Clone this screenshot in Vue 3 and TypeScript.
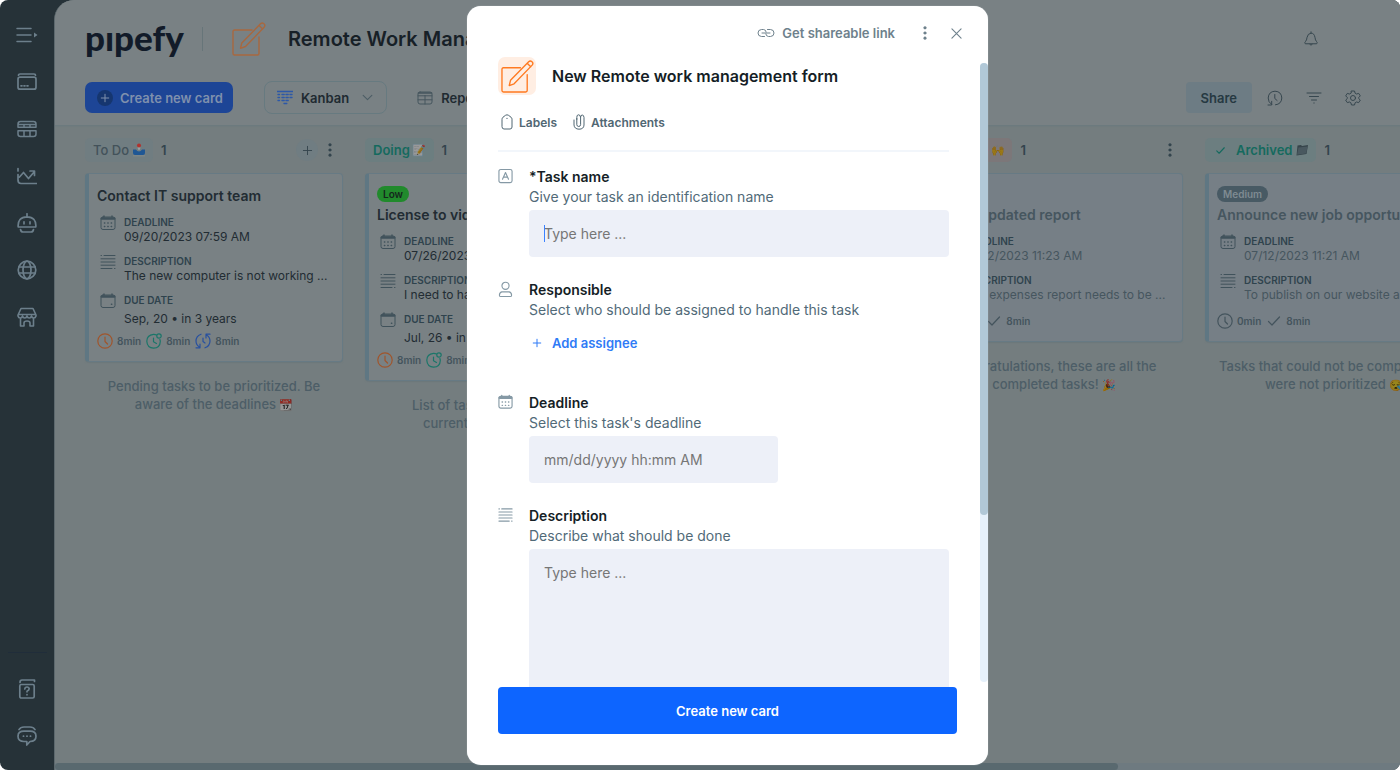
<script setup lang="ts">
import { ref } from 'vue'

interface Field { icon: string; label: string; value: string; due?: boolean }
interface Time { icon: string; text: string; tone: string }
interface Card { tag?: string; tagTone?: string; title: string; fields: Field[]; times: Time[]; muted?: boolean }
interface Column { id: string; name: string; emoji?: string; art?: string; tone: string; count?: string; add?: boolean; check?: boolean; card?: Card; note: string[]; noteEmoji: string }

const navItems = [
  { id: 'menu', label: 'Expand menu' },
  { id: 'home', label: 'Home' },
  { id: 'database', label: 'Databases' },
  { id: 'chart', label: 'Dashboards' },
  { id: 'robot', label: 'Automations' },
  { id: 'globe', label: 'Portals' },
  { id: 'store', label: 'Templates' },
]
const helpItems = [
  { id: 'help', label: 'Help' },
  { id: 'chat', label: 'Chat' },
]

const activeTimes: Time[] = [
  { icon: 'clock', text: '8min', tone: 'orange' },
  { icon: 'clock-dot', text: '8min', tone: 'green' },
  { icon: 'clock-sync', text: '8min', tone: 'blue' },
]

const columns: Column[] = [
  {
    id: 'todo', name: 'To Do', art: 'inbox', tone: 'grey', count: '1', add: true,
    card: {
      title: 'Contact IT support team',
      fields: [
        { icon: 'calendar', label: 'DEADLINE', value: '09/20/2023 07:59 AM' },
        { icon: 'lines', label: 'DESCRIPTION', value: 'The new computer is not working ...' },
        { icon: 'due', label: 'DUE DATE', value: 'Sep, 20 • in 3 years', due: true },
      ],
      times: activeTimes,
    },
    note: ['Pending tasks to be prioritized. Be', 'aware of the deadlines'], noteEmoji: '📆',
  },
  {
    id: 'doing', name: 'Doing', emoji: '📝', tone: 'teal', count: '1',
    card: {
      tag: 'Low', tagTone: 'low', title: 'License to video platform',
      fields: [
        { icon: 'calendar', label: 'DEADLINE', value: '07/26/2023 11:00 AM' },
        { icon: 'lines', label: 'DESCRIPTION', value: 'I need to have access to the ...' },
        { icon: 'due', label: 'DUE DATE', value: 'Jul, 26 • in 3 years', due: true },
      ],
      times: activeTimes,
    },
    note: ['List of tasks that are being', 'currently worked on'], noteEmoji: '💻',
  },
  { id: 'review', name: '', tone: 'none', note: [], noteEmoji: '' },
  {
    id: 'done', name: 'Done', emoji: '🙌', tone: 'pink', count: '1', check: true,
    card: {
      tag: 'Low', tagTone: 'low', title: 'Share updated report', muted: true,
      fields: [
        { icon: 'calendar', label: 'DEADLINE', value: '07/12/2023 11:23 AM' },
        { icon: 'lines', label: 'DESCRIPTION', value: 'The expenses report needs to be ...' },
      ],
      times: [{ icon: 'clock', text: '0min', tone: 'plain' }, { icon: 'tick', text: '8min', tone: 'plain' }],
    },
    note: ['Congratulations, these are all the', 'completed tasks!'], noteEmoji: '🎉',
  },
  {
    id: 'archived', name: 'Archived', art: 'folder', tone: 'teal', count: '1', check: true,
    card: {
      tag: 'Medium', tagTone: 'medium', title: 'Announce new job opportunity', muted: true,
      fields: [
        { icon: 'calendar', label: 'DEADLINE', value: '07/12/2023 11:21 AM' },
        { icon: 'lines', label: 'DESCRIPTION', value: 'To publish on our website and ...' },
      ],
      times: [{ icon: 'clock', text: '0min', tone: 'plain' }, { icon: 'tick', text: '8min', tone: 'plain' }],
    },
    note: ['Tasks that could not be completed or', 'were not prioritized'], noteEmoji: '😪',
  },
]

const taskName = ref('')
const deadline = ref('')
const description = ref('')
</script>

<template>
  <div class="app">
    <svg class="defs" aria-hidden="true">
      <symbol id="menu" viewBox="0 0 24 20"><path d="M2 3.500h14M2 10h14M2 16.500h14" /><path class="solid" d="M19 7.500v5l3.500-2.500z" /></symbol>
      <symbol id="home" viewBox="0 0 20 20"><path d="M1.500 3.200q0-1.200 1.500-1.200h14q1.500 0 1.500 1.200" /><rect x="1" y="5.200" width="18" height="12" rx="2" /><path d="M4 13.800h1M7 13.800h1M10 13.800h1" /></symbol>
      <symbol id="database" viewBox="0 0 20 20"><path d="M3.500 2.500h13q2.500 0 2.500 2.500v3.200h-18v-3.200q0-2.500 2.500-2.500zM1 11.800h18v3.200q0 2.500-2.500 2.500h-13q-2.500 0-2.500-2.500zM7 5.500v2.700M13 5.500v2.700M7 11.800v5.700M13 11.800v5.700M1 5.500h18" stroke-width="1.500" /></symbol>
      <symbol id="chart" viewBox="0 0 20 20"><path d="M1 2.500v2.500M1 8.500v5.500q0 3.500 3 3.500h15.500M2.500 11l4-4.500 5 6 6-7M13 5h4.500v4.500" /></symbol>
      <symbol id="robot" viewBox="0 0 20 20"><path d="M10 .800v2.500M1.200 14q-.8-10 8.800-10.200Q19.600 4 18.800 14zM3.500 16.500q.5 2.500 2.500 2.500h8q2 0 2.500-2.500M7 8.800v2M13 8.800v2" /></symbol>
      <symbol id="globe" viewBox="0 0 20 20"><circle cx="10" cy="10" r="8.800" /><ellipse cx="10" cy="10" rx="4" ry="8.800" /><path d="M1.800 7h16.400M1.800 13h16.400" /></symbol>
      <symbol id="store" viewBox="0 0 20 20"><path d="M4 1.500h12l3 6.500v1q-.5 2-2.300 2-1.700 0-2.200-2-.5 2-2.250 2T10 9q-.5 2-2.250 2T5.500 9q-.5 2-2.200 2Q1.500 11 1 9v-1zM1.500 7.500h17M3.500 11.500v7.500h3.500v-3q0-2 3-2t3 2v3h3.500v-7.500" stroke-width="1.600" /></symbol>
      <symbol id="help" viewBox="0 0 20 20"><path d="M3 3.500q0-2.500 2-2.500h12.500v1.500" /><rect x="2.800" y="5.500" width="14.400" height="13.500" rx="1.500" /><path d="M7.800 10q.2-2 2.200-2t2.200 1.800Q12.200 11.300 10 12.200v.6M10 15.600v.2" /></symbol>
      <symbol id="chat" viewBox="0 0 20 20"><path d="M2 3.600Q3.500 1 7 1h6q3.500 0 5 2.600M7 5.200h6q6 0 6 5 0 5-6 5.300l-3.200 3.500v-3.500H7q-6 0-6-5.300 0-5 6-5z" /><path d="M6.400 10.200h.2M9.900 10.200h.2M13.400 10.200h.2" /></symbol>
      <symbol id="form" viewBox="0 0 34 34"><path d="M20 8H2.500q-1.500 0-1.500 1.500v22q0 1.500 1.500 1.500h23q1.500 0 1.500-1.500V15M28.500 1.800q1.600-1.600 3.400 0t.2 3.500L13.500 24.500l-5 1.800 1.300-5.400zM27 3.300l3.600 3.600" /></symbol>
      <symbol id="kanban" viewBox="0 0 16 16"><path d="M.5 1.500h15" stroke-width="1.600" /><path d="M1 4.500h1.500M5 4.500h2.200M9 4.500h2.200M13 4.500h2M1 7.500h1.500M5 7.500h2.200M9 7.500h2.200M13 7.500h2M1 10.500h1.500M5 10.500h2.200M9 10.500h2.200M7 13.500h2.800" /></symbol>
      <symbol id="table" viewBox="0 0 16 16"><rect x="1" y="2" width="14" height="12" rx="2" /><path d="M1 5.800h14M1 9.800h14M8 5.500v8.500" /><path d="M1.500 3h13" stroke-width="1.600" /></symbol>
      <symbol id="chevron" viewBox="0 0 12 12"><path d="M2 4l4 4 4-4" /></symbol>
      <symbol id="bell" viewBox="0 0 16 16"><path d="M8 .800v1.200M2 12.500q-.8-.8.500-2 1.200-1.200 1.500-4Q4.800 2.400 8 2.200t4 4.300q.3 2.800 1.500 4 1.300 1.200.5 2zM6.800 13.500q1.200 1.600 2.400 0" /></symbol>
      <symbol id="history" viewBox="0 0 16 16"><path d="M4.500 14.300Q1.200 12.300 1.200 8 1.600 1.500 8 1.200q6.500.3 6.800 6.800-.3 6.200-6.300 6.800M7.800 4.500v4l2.300 2M1 15h3.700v-3.700" /></symbol>
      <symbol id="filter" viewBox="0 0 16 16"><path d="M1 3h14M3.500 6.500h9M5.500 10h5M7.800 13h.4" /></symbol>
      <symbol id="gear" viewBox="0 0 16 16"><circle cx="8" cy="8" r="2.500" /><path d="M6.500 1h3l.6 2.200 1.400.8 2.200-.6 1.600 2.500L13.700 7.500v1l1.600 1.600-1.600 2.500-2.200-.6-1.400.8L9.500 15h-3l-.6-2.200-1.400-.8-2.200.6L.7 10.100l1.600-1.600v-1L.7 5.900l1.600-2.500 2.200.6 1.400-.8z" /></symbol>
      <symbol id="plus" viewBox="0 0 12 12"><path d="M6 1.500v9M1.500 6h9" /></symbol>
      <symbol id="tick" viewBox="0 0 16 16"><path d="M2.500 8.500l3.500 3.500 7.500-8" /></symbol>
      <symbol id="dots" viewBox="0 0 6 16"><path class="solid" d="M3 1.200a1.600 1.600 0 1 0 .01 0zM3 6.400a1.600 1.600 0 1 0 .01 0zM3 11.600a1.600 1.600 0 1 0 .01 0z" /></symbol>
      <symbol id="calendar" viewBox="0 0 16 16"><rect x="1" y="2" width="14" height="12.500" rx="2" /><path d="M1.800 3.500h12.400" stroke-width="2.600" /><path d="M4 1v1M12 1v1M4.400 8h.4M7.800 8h.4M11.200 8h.4M4.400 11.500h.4M7.800 11.500h.4M11.200 11.500h.4" stroke-width="1.400" /></symbol>
      <symbol id="lines" viewBox="0 0 16 16"><path d="M1 1.500h.5M4 1.500h11M1 4.800h14M1 8h14M1 11.200h14M1 14.500h11M14.500 14.500h.5" /></symbol>
      <symbol id="due" viewBox="0 0 16 16"><rect x="1" y="2" width="14" height="12.500" rx="2" /><path d="M1.800 3.500h12.400" stroke-width="2.600" /><path d="M4 1v1M12 1v1M11.400 11.300h.4" stroke-width="1.400" /></symbol>
      <symbol id="clock" viewBox="0 0 16 16"><circle cx="8" cy="8" r="7.200" /><path d="M8 4v4.500l2.500 2.500" /></symbol>
      <symbol id="clock-dot" viewBox="0 0 16 16"><path d="M10.500 2Q9 1.200 7.500 1.300.8 2 .8 8.300 1.200 15 7.600 15.200 14 15 14.300 8.500q0-1-.4-2M7.500 5v3.800l3 1.700" /><circle cx="13" cy="3" r="2.200" /></symbol>
      <symbol id="clock-sync" viewBox="0 0 16 16"><path d="M6 1.200Q1 3 1 8q0 4 3.500 6M1 14.800h4V11M10 14.800Q15 13 15 8q0-4-3.500-6M15 1.200h-4V5M8 5v3.500l2 1.500" /></symbol>
      <symbol id="link" viewBox="0 0 18 12"><path d="M10.500 2.500h3Q17 2.700 17 6t-3.500 3.500h-2Q9 9.300 8.800 7M7.500 9.500h-3Q1 9.300 1 6t3.500-3.500h2Q9 2.700 9.200 5M5 6h8" /></symbol>
      <symbol id="close" viewBox="0 0 12 12"><path d="M1 1l10 10M11 1L1 11" /></symbol>
      <symbol id="label" viewBox="0 0 12 16"><path d="M1 5.200Q1 4 2 3.200L4.500 1.300Q6 .3 7.500 1.300L10 3.200q1 .8 1 2V13q0 2-2 2H3q-2 0-2-2zM5.800 4.400h.4" /></symbol>
      <symbol id="clip" viewBox="0 0 12 16"><path d="M3.800 4.500v6.200q.2 1.800 1.900 1.800t1.900-1.800V3.400Q7.600 1 9.200 1T11 3.400v7.600q-.2 4.200-5 4.200-4.600-.2-5-4.200V6M7.600 3.400Q7.500.8 5.600.8T3.800 3.400v2" /></symbol>
      <symbol id="letter" viewBox="0 0 16 16"><rect x="1" y="1" width="14" height="14" rx="2" /><path d="M4.800 11.500L8 4.300l3.200 7.200M6 9.200h4" /></symbol>
      <symbol id="person" viewBox="0 0 16 18"><circle cx="8" cy="5" r="3.800" /><path d="M4 11.500h8q2.500.8 2.500 3.500 0 1.500-1.500 1.500H3q-1.500 0-1.500-1.500 0-2.700 2.500-3.500z" /></symbol>
      <symbol id="inbox" viewBox="0 0 14 14"><path d="M1 12h12v1.500H1z" fill="#7c8586" stroke="none" /><path d="M1 6.500h3q1 2 3 2t3-2h3v3.500q0 2-2 2H3q-2 0-2-2z" fill="#1f5794" stroke="none" /><path d="M5.800 4h2.400v2L7 7.500 5.800 6z" fill="#96a0a3" stroke="none" /><circle cx="7" cy="2.500" r="2" fill="#b0332e" stroke="none" /></symbol>
      <symbol id="folder" viewBox="0 0 14 14"><path d="M2.500 2.500l3.500-.5 1 1 6-1-1.500 9-10 1.500z" fill="#36444a" stroke="none" /><path d="M3.500 4.500l9-1-1.300 7-9.200 1.300z" fill="#49585f" stroke="none" /></symbol>
    </svg>

    <nav class="sidebar" aria-label="Main">
      <button v-for="item in navItems" :key="item.id" type="button" class="nav-btn" :aria-label="item.label">
        <svg :class="{ wide: item.id === 'menu' }"><use :href="'#' + item.id" /></svg>
      </button>
      <hr class="nav-rule">
      <button v-for="item in helpItems" :key="item.id" type="button" class="nav-btn" :aria-label="item.label">
        <svg><use :href="'#' + item.id" /></svg>
      </button>
    </nav>

    <main class="main">
      <header class="header">
        <div class="brand-row">
          <span class="logo">pıpefy</span>
          <span class="brand-rule"></span>
          <svg class="pipe-icon"><use href="#form" /></svg>
          <h1>Remote Work Management</h1>
          <button type="button" class="bell" aria-label="Notifications"><svg class="i16"><use href="#bell" /></svg></button>
        </div>
        <div class="tool-row">
          <button type="button" class="create"><span class="create-plus"><svg><use href="#plus" /></svg></span>Create new card</button>
          <button type="button" class="view"><svg class="i16 blue"><use href="#kanban" /></svg>Kanban<svg class="chev"><use href="#chevron" /></svg></button>
          <button type="button" class="reports"><svg class="i16"><use href="#table" /></svg>Reports</button>
          <button type="button" class="share">Share</button>
          <button type="button" class="tool" aria-label="History"><svg class="i16"><use href="#history" /></svg></button>
          <button type="button" class="tool" aria-label="Filter"><svg class="i16"><use href="#filter" /></svg></button>
          <button type="button" class="tool" aria-label="Settings"><svg class="i16"><use href="#gear" /></svg></button>
        </div>
      </header>

      <div class="board">
        <section v-for="col in columns" :key="col.id" class="column">
          <template v-if="col.card">
            <div class="col-head">
              <h2 class="chip" :class="col.tone">
                <svg v-if="col.check" class="chip-check"><use href="#tick" /></svg>{{ col.name }}<span v-if="col.emoji" class="emoji">{{ col.emoji }}</span><svg v-if="col.art" class="art"><use :href="'#' + col.art" /></svg>
              </h2>
              <span class="count">{{ col.count }}</span>
              <button v-if="col.add" type="button" class="col-add" aria-label="Add card"><svg><use href="#plus" /></svg></button>
              <button type="button" class="col-more" aria-label="Column options"><svg class="dots"><use href="#dots" /></svg></button>
            </div>
            <article class="card" :class="{ muted: col.card.muted }">
              <span v-if="col.card.tag" class="tag" :class="col.card.tagTone">{{ col.card.tag }}</span>
              <h3>{{ col.card.title }}</h3>
              <div v-for="f in col.card.fields" :key="f.label" class="field" :class="{ due: f.due }">
                <svg class="i16"><use :href="'#' + f.icon" /></svg>
                <div class="field-text">
                  <p class="field-label">{{ f.label }}</p>
                  <p class="field-value">{{ f.value }}</p>
                </div>
              </div>
              <div class="times">
                <span v-for="(t, n) in col.card.times" :key="n" class="time"><svg class="i16" :class="t.tone"><use :href="'#' + t.icon" /></svg>{{ t.text }}</span>
              </div>
            </article>
            <p class="note">{{ col.note[0] }}<br>{{ col.note[1] }} <span class="emoji">{{ col.noteEmoji }}</span></p>
          </template>
        </section>
      </div>
      <div class="hscroll"><div class="hthumb"></div></div>

      <div class="overlay">
        <section class="modal" role="dialog" aria-labelledby="modal-title">
          <div class="modal-top">
            <button type="button" class="share-link"><svg><use href="#link" /></svg>Get shareable link</button>
            <button type="button" class="top-more" aria-label="More options"><svg class="dots"><use href="#dots" /></svg></button>
            <button type="button" class="top-close" aria-label="Close"><svg><use href="#close" /></svg></button>
          </div>
          <form class="modal-form" @submit.prevent>
            <div class="modal-scroll">
              <div class="modal-title">
                <span class="modal-icon"><svg><use href="#form" /></svg></span>
                <h2 id="modal-title">New Remote work management form</h2>
              </div>
              <div class="extras">
                <button type="button"><svg><use href="#label" /></svg>Labels</button>
                <button type="button"><svg><use href="#clip" /></svg>Attachments</button>
              </div>
              <hr class="modal-rule">

              <div class="group">
                <svg class="i16"><use href="#letter" /></svg>
                <div class="group-body">
                  <label for="task-name">*Task name</label>
                  <p class="hint">Give your task an identification name</p>
                  <div class="caret-box"><input id="task-name" v-model="taskName" type="text" placeholder="Type here ..."><span class="caret"></span></div>
                </div>
              </div>
              <div class="group">
                <svg class="person"><use href="#person" /></svg>
                <div class="group-body">
                  <h3>Responsible</h3>
                  <p class="hint">Select who should be assigned to handle this task</p>
                  <button type="button" class="assignee"><svg><use href="#plus" /></svg>Add assignee</button>
                </div>
              </div>
              <div class="group">
                <svg class="i16"><use href="#calendar" /></svg>
                <div class="group-body">
                  <label for="deadline">Deadline</label>
                  <p class="hint">Select this task's deadline</p>
                  <input id="deadline" v-model="deadline" class="short" type="text" placeholder="mm/dd/yyyy hh:mm AM">
                </div>
              </div>
              <div class="group">
                <svg class="i16"><use href="#lines" /></svg>
                <div class="group-body">
                  <label for="description">Description</label>
                  <p class="hint">Describe what should be done</p>
                  <textarea id="description" v-model="description" placeholder="Type here ..."></textarea>
                </div>
              </div>
            </div>
            <button type="submit" class="submit">Create new card</button>
          </form>
          <div class="vscroll"><div class="vthumb"></div></div>
        </section>
      </div>
    </main>
  </div>
</template>

<style>
body { margin: 0; background: #fff; }
</style>

<style scoped>
* { box-sizing: border-box; }
h1, h2, h3, p { margin: 0; }
button { font: inherit; color: inherit; background: none; border: 0; padding: 0; display: inline-flex; align-items: center; cursor: pointer; }
svg { fill: none; stroke: currentColor; stroke-width: 1; flex: none; stroke-linecap: round; stroke-linejoin: round; }
.defs { display: none; }
.solid { fill: currentColor; stroke: none; }
.i16 { width: 16px; height: 16px; }
.dots { width: 6px; height: 16px; }
.app { display: flex; height: 100vh; overflow: hidden; background: #263238; border-radius: 8px; font-family: Inter, "Liberation Sans", sans-serif; font-size: 13px; }

.sidebar { width: 54px; flex: none; display: flex; flex-direction: column; align-items: center; padding: 11px 0; color: #6c7f8b; }
.nav-btn { width: 47px; height: 47px; flex: none; justify-content: center; }
.nav-btn svg { width: 20px; height: 20px; stroke-width: 1.700; }
.nav-btn svg.wide { width: 24px; stroke-width: 1.500; }
.nav-rule { width: 39px; margin: auto 0 12px; border: 0; border-top: 1px solid #202d3a; }

.main { position: relative; flex: 1; min-width: 0; display: flex; flex-direction: column; background: #747d7f; border-left: 1px solid #5d696e; border-top-left-radius: 20px; overflow: hidden; }
.header { background: #798184; border-bottom: 1px solid #6c7a7e; padding: 19px 39px 11px 30px; box-shadow: 0 1px 1px #707b7e; }
.brand-row { display: flex; align-items: center; height: 40px; color: #15202a; }
.logo { font-family: Lato, "Liberation Sans", sans-serif; font-weight: 900; font-size: 35px; line-height: 36px; color: #121b29; width: 98px; padding-bottom: 4px; }
.brand-rule { width: 1px; height: 24px; background: #677579; margin: 0 29px 0 19px; }
.pipe-icon { width: 34px; height: 34px; color: #a8683f; margin-right: 22px; stroke-width: 1.400; }
h1 { font-size: 20px; line-height: 24px; font-weight: 600; color: #172027; white-space: nowrap; flex: 1; }
.bell { color: #37474f; margin-right: 42px; }
.tool-row { display: flex; align-items: center; margin-top: 22px; height: 33px; font-weight: 600; color: #202a31; }
.create { height: 31px; padding: 0 10px 0 12px; border-radius: 7px; background: #1d4596; color: #7f90ad; gap: 7px; }
.create-plus { width: 16px; height: 16px; border-radius: 50%; background: #16366f; display: inline-grid; place-items: center; }
.create-plus svg { width: 10px; height: 10px; stroke-width: 1.200; }
.view { height: 33px; border: 1px solid #677a80; border-radius: 8px; margin-left: 31px; padding: 0 12px 0 12px; gap: 8px; }
.blue { color: #2c58a8; }
.view .blue { stroke-width: 1.400; }
.chev { width: 13px; height: 13px; margin-left: 4px; color: #4d5d65; }
.reports { margin-left: 30px; gap: 8px; }
.reports svg { color: #46565e; }
.share { margin-left: auto; height: 31px; padding: 0 15px; border-radius: 4px; background: #6d7c84; color: #263942; }
.tool { color: #37474f; margin-left: 23px; }
.share + .tool { margin-left: 15px; }

.board { flex: 1; display: flex; gap: 22px; padding: 12px 0 0 30px; overflow: hidden; }
.column { width: 258px; flex: none; }
.col-head { display: flex; align-items: center; height: 24px; margin-bottom: 11px; color: #33444d; }
.chip { display: inline-flex; align-items: center; height: 24px; padding: 0 7px 0 8px; border-radius: 5px; font-size: 13px; font-weight: 500; gap: 3px; }
.chip.grey { background: #707d81; color: #43525a; }
.chip.teal { background: #6c7e80; color: #156a5e; font-weight: 600; }
.chip.pink { background: #7c7779; color: #9c3540; }
.chip-check { width: 11px; height: 11px; margin: 0 7px 0 2px; stroke-width: 1.600; }
.art { width: 14px; height: 14px; }
.emoji { filter: brightness(.6); font-family: "Noto Color Emoji", sans-serif; font-size: 11px; }
.count { margin-left: 8px; font-weight: 600; }
.col-more { margin-left: auto; margin-right: 10px; }
.col-add { width: 22px; height: 22px; border-radius: 50%; background: #707d82; margin-left: auto; justify-content: center; }
.col-add svg { width: 11px; height: 11px; }
.col-add + .col-more { margin-left: 9px; }
.card { background: #798184; border: 1px solid #677a84; border-left: 4px solid #5f7783; border-radius: 4px; padding: 12px 8px; box-shadow: 0 1px 1px #6c787c; color: #222c33; overflow: hidden; }
.tag { display: block; width: fit-content; margin-bottom: 3px; border-radius: 8px; padding: 0 6px; font-size: 10px; line-height: 16px; font-weight: 600; }
.tag.low { background: #218a2c; color: #14271c; }
.tag.medium { background: #485a64; color: #7f8b92; }
.card h3 { font-size: 14px; line-height: 20px; font-weight: 600; white-space: nowrap; }
.field { display: flex; margin-top: 9px; gap: 8px; padding-left: 3px; }
.field svg { color: #40525b; }
.field-text { min-width: 0; }
.field-label { font-size: 10px; line-height: 14px; font-weight: 600; color: #2f434d; }
.field-value { font-size: 12px; line-height: 16px; white-space: nowrap; }
.due .field-value { line-height: 24px; }
.times { display: flex; gap: 5px; margin-top: 10px; }
.due + .times { margin-top: 2px; }
.time { display: inline-flex; align-items: center; gap: 4px; font-size: 10px; line-height: 16px; font-weight: 600; color: #44545d; }
.time svg { stroke-width: 1.200; }
.orange { color: #a0552c; }
.green { color: #1b7669; }
.time .blue { color: #2750a0; }
.muted { background: #767f86; color: #46565f; }
.note { margin-top: 15px; text-align: center; line-height: 18px; color: #4d5e67; font-size: 13px; font-weight: 500; white-space: nowrap; }
.hscroll { height: 7px; flex: none; background: #6e7a80; }
.hthumb { width: 79%; height: 7px; background: #59696f; border-radius: 4px; }

.overlay { position: absolute; inset: 0; display: flex; justify-content: center; padding: 6px 16px 5px; }
.modal { position: relative; width: 100%; max-width: 521px; background: #fff; border-radius: 14px; overflow: hidden; display: flex; flex-direction: column; color: #151e26; box-shadow: 0 0 1px #c9d1d5; }
.modal-top { display: flex; align-items: center; justify-content: flex-end; height: 54px; padding: 0 26px; flex: none; color: #6e818c; font-weight: 600; }
.share-link { gap: 7px; }
.share-link svg { width: 18px; height: 12px; }
.top-more { margin-left: 27px; }
.top-close { margin-left: 23px; }
.top-close svg { width: 11px; height: 11px; stroke-width: 1.200; }
.modal-form { flex: 1; min-height: 0; display: flex; flex-direction: column; padding: 0 31px 31px; }
.modal-scroll { flex: 1; min-height: 0; overflow: hidden; padding-right: 8px; margin-top: -4px; }
.modal-title { display: flex; align-items: center; gap: 16px; height: 40px; }
.modal-icon { width: 38px; height: 38px; border-radius: 7px; background: #ffeee3; color: #ff7a21; display: grid; place-items: center; }
.modal-icon svg { width: 33px; height: 33px; stroke-width: 1.400; }
.modal-title h2 { font-size: 16px; line-height: 24px; font-weight: 600; }
.extras { display: flex; gap: 16px; height: 16px; margin: 18px 0 20px 3px; font-size: 12px; font-weight: 600; color: #516773; }
.extras button { gap: 6px; }
.extras svg { width: 12px; height: 16px; }
.modal-rule { margin: 0; border: 0; border-top: 2px solid #f2f6fb; }
.group { display: flex; gap: 16px; margin-top: 23px; }
.modal-rule + .group { margin-top: 15px; }
.group svg { color: #8599a5; stroke-width: 1.200; }
.group > svg { margin-top: 1px; width: 15px; }
.group > .person { height: 17px; width: 15px; }
.group-body { flex: 1; min-width: 0; display: flex; flex-direction: column; align-items: flex-start; }
label, .group h3 { font-size: 14px; line-height: 20px; font-weight: 600; }
.hint { font-size: 14px; line-height: 20px; color: #516a78; margin-bottom: 3px; }
input, textarea { display: block; width: 100%; border: 0; border-radius: 4px; background: #edf0f8; font: inherit; font-size: 14px; line-height: 20px; padding: 0 15px; height: 47px; color: #151e26; outline: 0; resize: none; }
textarea { height: 160px; padding-top: 14px; }
input::placeholder, textarea::placeholder { color: #767676; opacity: 1; }
input.short { width: 249px; }
.caret-box { position: relative; width: 100%; }
.caret { position: absolute; left: 15px; top: 15px; width: 1px; height: 17px; background: #3b82ff; }
.assignee { height: 40px; padding-left: 3px; gap: 10px; color: #2f7bf6; font-weight: 600; margin-bottom: 7px; }
.group .assignee svg { width: 10px; height: 10px; color: #2f7bf6; }
.submit { height: 47px; flex: none; justify-content: center; background: #0d65ff; color: #fff; border-radius: 4px; font-weight: 600; }
.vscroll { position: absolute; top: 57px; right: 0; bottom: 83px; width: 8px; border-radius: 4px; background: #e6f1fb; }
.vthumb { height: 73%; border-radius: 4px; background: #b1c8d7; }
</style>
